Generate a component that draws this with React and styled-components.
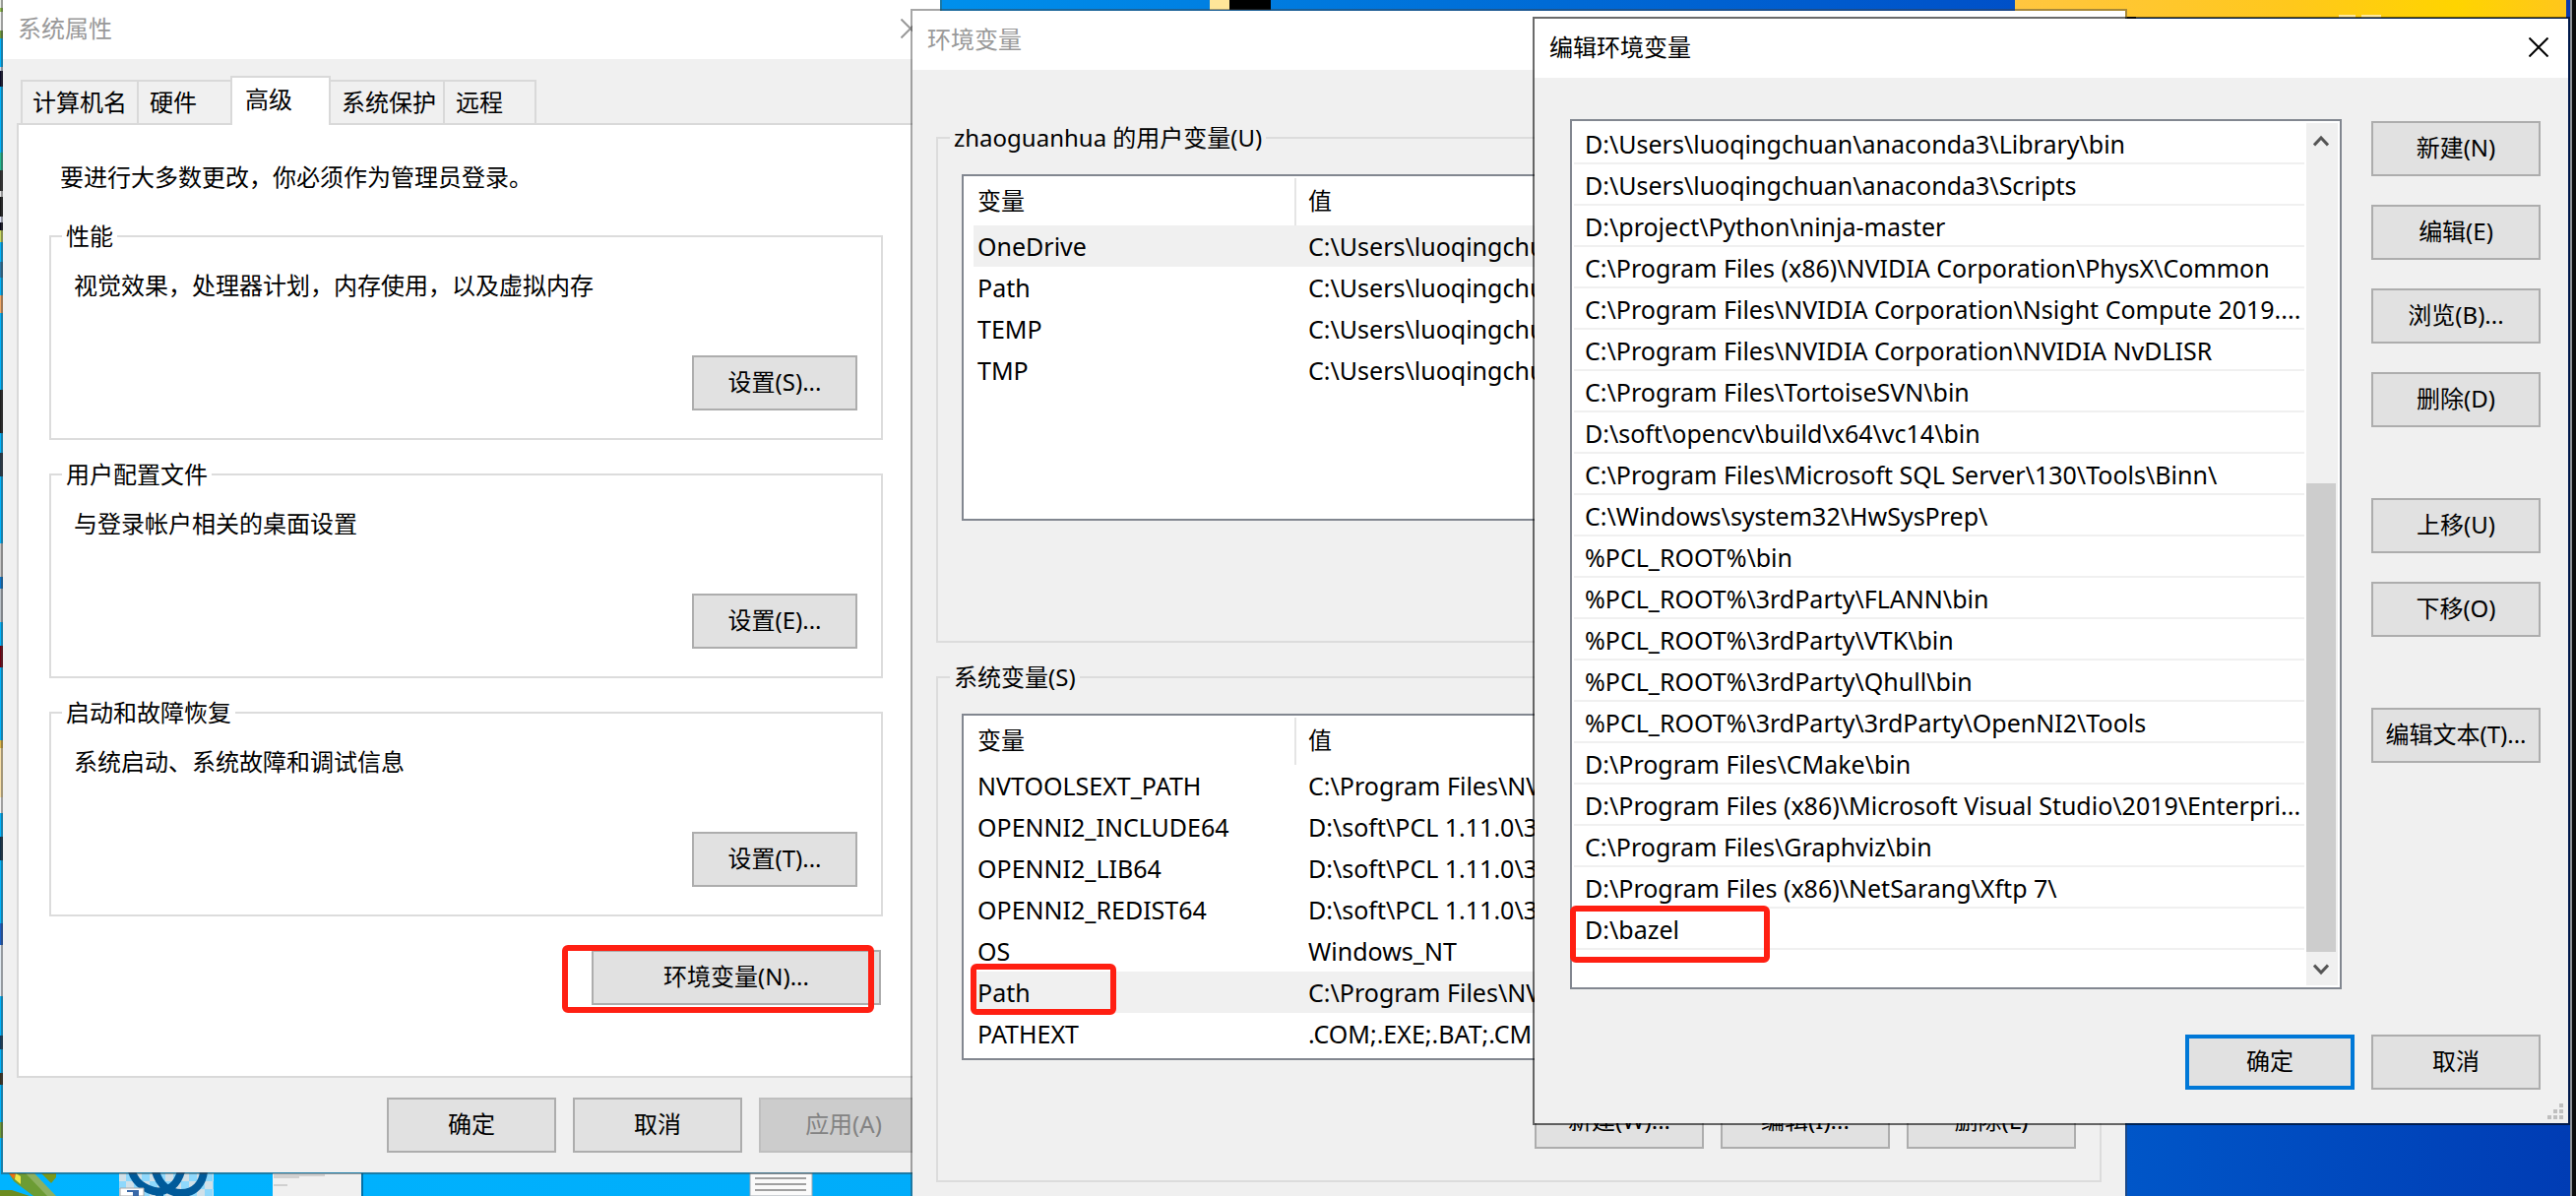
import React from "react";
import styled, { createGlobalStyle, css } from "styled-components";

const GlobalStyle = createGlobalStyle`
  * { box-sizing: border-box; }
  html, body, #root { height: 100%; }
  body {
    margin: 0;
    overflow: hidden;
    color: #000;
    font-family: "Noto Sans", "Noto Sans CJK SC", sans-serif;
    font-size: 24px;
    line-height: 32px;
  }
`;

/* ---------- desktop ---------- */

const Desktop = styled.main`
  position: relative;
  width: 100%;
  height: 100%;
  overflow: hidden;
  background: linear-gradient(90deg, #00b4ff 0%, #00acfa 36%, #0078e0 48%, #0056c8 80%, #003cb4 100%);
`;

const Wallpaper = styled.svg`
  position: absolute;
  left: 0;
  top: 0;
`;

const ScreenEdge = styled.div`
  position: absolute;
  top: 0;
  right: 0;
  bottom: 0;
  width: 6px;
  border-left: 2px solid #8f9296;
  background: #0c0c0c;
`;

/* ---------- window chrome ---------- */

const WindowFrame = styled.section`
  position: absolute;
  display: flex;
  flex-direction: column;
  left: ${(p) => p.$x}px;
  top: ${(p) => p.$y}px;
  width: ${(p) => p.$width}px;
  border: 2px solid ${(p) => (p.$active ? "rgba(0, 0, 0, 0.58)" : "rgba(60, 60, 60, 0.45)")};
  background: #f0f0f0;
  background-clip: padding-box;
`;

const TitleBar = styled.header`
  display: flex;
  align-items: center;
  justify-content: space-between;
  height: 60px;
  padding: 0 20px 3px 15px;
  background: #fff;
  color: ${(p) => (p.$active ? "#000" : "#999")};
`;

const Title = styled.h1`
  margin: 0;
  font-size: 24px;
  font-weight: 400;
`;

const CloseButton = styled.button`
  display: flex;
  padding: 0;
  border: 0;
  background: none;
  color: inherit;
`;

function TitleRow({ title, active, closable }) {
  return (
    <TitleBar $active={active}>
      <Title>{title}</Title>
      {closable && (
        <CloseButton type="button" aria-label="关闭">
          <svg width="20" height="20" viewBox="0 0 20 20" stroke="currentColor" strokeWidth="2">
            <path d="M0.5 0.5L19.5 19.5M19.5 0.5L0.5 19.5" />
          </svg>
        </CloseButton>
      )}
    </TitleBar>
  );
}

/* ---------- shared controls ---------- */

const Button = styled.button`
  width: ${(p) => p.$width || 172}px;
  height: 56px;
  padding: 0 0 2px;
  border: 2px solid #adadad;
  background: #e1e1e1;
  color: #000;
  font-family: inherit;
  font-size: 24px;
  line-height: 32px;
  white-space: nowrap;
  ${(p) => p.$primary && css`border: 4px solid #0078d7;`}
  &:disabled {
    border-color: #bfbfbf;
    background: #ccc;
    color: #838383;
  }
`;

const ButtonRow = styled.div`
  display: flex;
  justify-content: flex-end;
  gap: 17px;
`;

const Group = styled.fieldset`
  min-width: 0;
  margin: 0;
  border: 2px solid #dcdcdc;
`;

const Legend = styled.legend`
  margin-left: -12px;
  padding: 0 4px;
`;

const Marker = styled.span`
  position: absolute;
  inset: ${(p) => p.$inset};
  width: ${(p) => p.$width || "auto"};
  border: 6px solid #ff1f12;
  border-radius: 6px;
  pointer-events: none;
`;

/* ---------- system properties ---------- */

const PropertiesBody = styled.div`
  display: flex;
  flex-direction: column;
  padding: 17px 12px 20px 14px;
`;

const TabBar = styled.nav`
  display: flex;
  align-items: flex-end;
  height: 48px;
  padding-left: 4px;
`;

const Tab = styled.button`
  width: ${(p) => p.$width}px;
  height: 44px;
  padding: 0 0 0 11px;
  border: 2px solid #d9d9d9;
  border-width: 2px 2px 0 0;
  background: #f0f0f0;
  color: #000;
  font-family: inherit;
  font-size: 24px;
  line-height: 32px;
  text-align: left;
  white-space: nowrap;
  &:first-child {
    border-left-width: 2px;
    padding-left: 10px;
  }
  ${(p) =>
    p.$selected &&
    css`
      position: relative;
      height: 50px;
      margin: 0 0 -2px -2px;
      padding: 0 0 4px 13px;
      border-left-width: 2px;
      background: #fff;
    `}
`;

const TabPanel = styled.div`
  margin-right: 2px;
  padding: 37px 42px 72px 31px;
  border: 2px solid #d9d9d9;
  background: #fff;
`;

const Intro = styled.p`
  margin: 0 0 28px;
  padding-left: 11px;
`;

const SettingsGroup = styled(Group)`
  margin-bottom: 19px;
  padding: 18px 24px 28px 23px;
`;

const Description = styled.p`
  margin: 0 0 55px;
`;

const EnvironmentRow = styled.div`
  display: flex;
  justify-content: flex-end;
  margin-top: 34px;
  padding-right: 2px;
`;

const Marked = styled.div`
  position: relative;
  display: flex;
`;

const PropertiesFooter = styled(ButtonRow)`
  margin-top: 20px;
`;

const TABS = [
  { label: "计算机名", width: 120 },
  { label: "硬件", width: 95 },
  { label: "高级", width: 102, selected: true },
  { label: "系统保护", width: 116 },
  { label: "远程", width: 93 },
];

const SETTINGS = [
  { legend: "性能", text: "视觉效果，处理器计划，内存使用，以及虚拟内存", button: "设置(S)..." },
  { legend: "用户配置文件", text: "与登录帐户相关的桌面设置", button: "设置(E)..." },
  { legend: "启动和故障恢复", text: "系统启动、系统故障和调试信息", button: "设置(T)..." },
];

function SystemProperties() {
  return (
    <WindowFrame $x={1} $y={-2} $width={956}>
      <TitleRow title="系统属性" closable />
      <PropertiesBody>
        <TabBar>
          {TABS.map((t) => (
            <Tab key={t.label} type="button" $width={t.width} $selected={t.selected}>
              {t.label}
            </Tab>
          ))}
        </TabBar>
        <TabPanel>
          <Intro>要进行大多数更改，你必须作为管理员登录。</Intro>
          {SETTINGS.map((s) => (
            <SettingsGroup key={s.legend}>
              <Legend>{s.legend}</Legend>
              <Description>{s.text}</Description>
              <ButtonRow>
                <Button type="button" $width={168}>{s.button}</Button>
              </ButtonRow>
            </SettingsGroup>
          ))}
          <EnvironmentRow>
            <Marked>
              <Button type="button" $width={294}>环境变量(N)...</Button>
              <Marker $inset="-5px 7px -8px -30px" />
            </Marked>
          </EnvironmentRow>
        </TabPanel>
        <PropertiesFooter>
          <Button type="button">确定</Button>
          <Button type="button">取消</Button>
          <Button type="button" disabled>应用(A)</Button>
        </PropertiesFooter>
      </PropertiesBody>
    </WindowFrame>
  );
}

/* ---------- environment variables ---------- */

const VariablesBody = styled.div`
  display: flex;
  flex-direction: column;
  gap: 19px;
  padding: 53px 24px 60px;
`;

const VariablesGroup = styled(Group)`
  min-height: 529px;
  padding: 21px 24px 32px;
`;

const ListBox = styled.div`
  height: 352px;
  border: 2px solid #828790;
  background: #fff;
  overflow: hidden;
`;

const VariablesTable = styled.table`
  width: calc(100% - 10px);
  margin: 2px 0 0 10px;
  border-collapse: separate;
  border-spacing: 0;
  table-layout: fixed;
  white-space: nowrap;
`;

const HeadCell = styled.th`
  width: ${(p) => p.$width || "auto"};
  height: 48px;
  padding: 0 0 2px ${(p) => (p.$width ? 4 : 12)}px;
  border-right: ${(p) => (p.$width ? "2px solid #e5e5e5" : "0")};
  font-weight: 400;
  text-align: left;
`;

const VariableRow = styled.tr`
  background: ${(p) => (p.$selected ? "#f0f0f0" : "transparent")};
`;

const listText = css`
  font-size: 25px;
  white-space: nowrap;
`;

const Cell = styled.td`
  ${listText}
  position: relative;
  height: 42px;
  padding: 0 0 0 ${(p) => (p.$name ? 4 : 12)}px;
`;

const VariablesButtons = styled(ButtonRow)`
  margin-top: 34px;
`;

const USER_VARIABLES = [
  { name: "OneDrive", value: "C:\\Users\\luoqingchu", selected: true },
  { name: "Path", value: "C:\\Users\\luoqingchu" },
  { name: "TEMP", value: "C:\\Users\\luoqingchu" },
  { name: "TMP", value: "C:\\Users\\luoqingchu" },
];

const SYSTEM_VARIABLES = [
  { name: "NVTOOLSEXT_PATH", value: "C:\\Program Files\\NV" },
  { name: "OPENNI2_INCLUDE64", value: "D:\\soft\\PCL 1.11.0\\3" },
  { name: "OPENNI2_LIB64", value: "D:\\soft\\PCL 1.11.0\\3" },
  { name: "OPENNI2_REDIST64", value: "D:\\soft\\PCL 1.11.0\\3" },
  { name: "OS", value: "Windows_NT" },
  { name: "Path", value: "C:\\Program Files\\NV", selected: true, marked: true },
  { name: "PATHEXT", value: ".COM;.EXE;.BAT;.CM" },
];

function VariableList({ items }) {
  return (
    <ListBox>
      <VariablesTable>
        <thead>
          <tr>
            <HeadCell scope="col" $width="328px">变量</HeadCell>
            <HeadCell scope="col">值</HeadCell>
          </tr>
        </thead>
        <tbody>
          {items.map((v) => (
            <VariableRow key={v.name} $selected={v.selected}>
              <Cell $name>
                {v.name}
                {v.marked && <Marker $inset="-8px auto -2px -3px" $width="148px" />}
              </Cell>
              <Cell>{v.value}</Cell>
            </VariableRow>
          ))}
        </tbody>
      </VariablesTable>
    </ListBox>
  );
}

function EnvironmentVariables() {
  return (
    <WindowFrame $x={925} $y={9} $width={1236}>
      <TitleRow title="环境变量" />
      <VariablesBody>
        <VariablesGroup>
          <Legend>zhaoguanhua 的用户变量(U)</Legend>
          <VariableList items={USER_VARIABLES} />
        </VariablesGroup>
        <VariablesGroup>
          <Legend>系统变量(S)</Legend>
          <VariableList items={SYSTEM_VARIABLES} />
          <VariablesButtons>
            <Button type="button">新建(W)...</Button>
            <Button type="button">编辑(I)...</Button>
            <Button type="button">删除(L)</Button>
          </VariablesButtons>
        </VariablesGroup>
      </VariablesBody>
    </WindowFrame>
  );
}

/* ---------- edit environment variable ---------- */

const EditorBody = styled.div`
  display: flex;
  flex-direction: column;
  gap: 46px;
  padding: 42px 28px 34px 36px;
`;

const EditorMain = styled.div`
  display: flex;
  gap: 30px;
`;

const PathBox = styled.div`
  display: flex;
  flex: 1;
  gap: 2px;
  height: 884px;
  padding: 2px;
  border: 2px solid #828790;
  background: #fff;
`;

const PathList = styled.ul`
  flex: 1;
  min-width: 0;
  margin: 0;
  padding: 0;
  list-style: none;
`;

const PathItem = styled.li`
  ${listText}
  position: relative;
  height: 42px;
  padding: 5px 0 0 11px;
  border-bottom: 2px solid #f0f0f0;
`;

const ScrollBar = styled.div`
  display: flex;
  flex-direction: column;
  width: 32px;
  background: #f0f0f0;
`;

const ScrollButton = styled.button`
  display: flex;
  align-items: center;
  justify-content: center;
  height: 34px;
  padding: 2px 2px 0 0;
  border: 0;
  background: none;
`;

const ScrollGap = styled.div`
  flex: 332;
`;

const ScrollThumb = styled.div`
  flex: 476;
  margin-right: 2px;
  background: #cdcdcd;
`;

const SideButtons = styled.div`
  display: flex;
  flex-direction: column;
  gap: 72px;
  padding-top: 2px;
`;

const ButtonStack = styled.div`
  display: flex;
  flex-direction: column;
  gap: 29px;
`;

const SizeGrip = styled.svg`
  position: absolute;
  right: 5px;
  bottom: 4px;
`;

const PATHS = [
  "D:\\Users\\luoqingchuan\\anaconda3\\Library\\bin",
  "D:\\Users\\luoqingchuan\\anaconda3\\Scripts",
  "D:\\project\\Python\\ninja-master",
  "C:\\Program Files (x86)\\NVIDIA Corporation\\PhysX\\Common",
  "C:\\Program Files\\NVIDIA Corporation\\Nsight Compute 2019....",
  "C:\\Program Files\\NVIDIA Corporation\\NVIDIA NvDLISR",
  "C:\\Program Files\\TortoiseSVN\\bin",
  "D:\\soft\\opencv\\build\\x64\\vc14\\bin",
  "C:\\Program Files\\Microsoft SQL Server\\130\\Tools\\Binn\\",
  "C:\\Windows\\system32\\HwSysPrep\\",
  "%PCL_ROOT%\\bin",
  "%PCL_ROOT%\\3rdParty\\FLANN\\bin",
  "%PCL_ROOT%\\3rdParty\\VTK\\bin",
  "%PCL_ROOT%\\3rdParty\\Qhull\\bin",
  "%PCL_ROOT%\\3rdParty\\3rdParty\\OpenNI2\\Tools",
  "D:\\Program Files\\CMake\\bin",
  "D:\\Program Files (x86)\\Microsoft Visual Studio\\2019\\Enterpri...",
  "C:\\Program Files\\Graphviz\\bin",
  "D:\\Program Files (x86)\\NetSarang\\Xftp 7\\",
  "D:\\bazel",
];

const ACTIONS = [
  ["新建(N)", "编辑(E)", "浏览(B)...", "删除(D)"],
  ["上移(U)", "下移(O)"],
  ["编辑文本(T)..."],
];

function Chevron({ down }) {
  return (
    <svg width="16" height="12" viewBox="0 0 16 12" fill="none" stroke="#555" strokeWidth="3">
      <path d={down ? "M1 1.5L8 9L15 1.5" : "M1 10.5L8 3L15 10.5"} />
    </svg>
  );
}

function EditVariable() {
  return (
    <WindowFrame $x={1557} $y={17} $width={1054} $active>
      <TitleRow title="编辑环境变量" active closable />
      <EditorBody>
        <EditorMain>
          <PathBox>
            <PathList>
              {PATHS.map((path, i) => (
                <PathItem key={path}>
                  {path}
                  {i === PATHS.length - 1 && <Marker $inset="-3px auto -15px -4px" $width="203px" />}
                </PathItem>
              ))}
            </PathList>
            <ScrollBar>
              <ScrollButton type="button" aria-label="向上滚动"><Chevron /></ScrollButton>
              <ScrollGap />
              <ScrollThumb />
              <ScrollButton type="button" aria-label="向下滚动"><Chevron down /></ScrollButton>
            </ScrollBar>
          </PathBox>
          <SideButtons>
            {ACTIONS.map((group) => (
              <ButtonStack key={group[0]}>
                {group.map((label) => (
                  <Button key={label} type="button">{label}</Button>
                ))}
              </ButtonStack>
            ))}
          </SideButtons>
        </EditorMain>
        <ButtonRow>
          <Button type="button" $primary>确定</Button>
          <Button type="button">取消</Button>
        </ButtonRow>
      </EditorBody>
      <SizeGrip width="16" height="16" viewBox="0 0 16 16" fill="#bfbfbf">
        <path d="M12 0h4v4h-4zM6 6h4v4H6zM12 6h4v4h-4zM0 12h4v4H0zM6 12h4v4H6zM12 12h4v4h-4z" />
      </SizeGrip>
    </WindowFrame>
  );
}

/* Slivers of desktop icons that show between the window edge and the screen edge: [y, height, colour] */
const EDGE_ICONS = [
  [0, 8, "#e8ece4"], [8, 4, "#8fc04a"], [12, 19, "#eef0ee"], [31, 8, "#6f9c3c"],
  [68, 4, "#cfd8e8"], [72, 16, "#0c0c28"], [155, 18, "#22b890"], [173, 26, "#2c2c2c"],
  [194, 6, "#e0e0e0"], [200, 20, "#181818"], [220, 6, "#d8dcf0"], [226, 8, "#080818"],
  [234, 12, "#c8d860"], [266, 16, "#2878a8"], [300, 18, "#f0a868"], [396, 44, "#202020"],
  [460, 24, "#243848"], [552, 34, "#c8c8c8"], [586, 12, "#0a78d0"], [598, 34, "#b8c0c8"],
  [656, 22, "#700010"], [752, 8, "#e0b848"], [760, 50, "#f8e0a8"], [810, 16, "#f0f0f0"],
  [850, 24, "#103048"], [938, 22, "#1860c8"], [960, 52, "#dfe8f0"], [1052, 14, "#103c60"],
  [1090, 12, "#383020"], [1140, 16, "#6c9c38"],
];

function Backdrop() {
  return (
    <Wallpaper width="2611" height="1215" viewBox="0 0 2611 1215" aria-hidden="true">
      <defs>
        <linearGradient id="banner">
          <stop offset="0" stopColor="#ffc640" />
          <stop offset="0.5" stopColor="#ffc81c" />
          <stop offset="0.8" stopColor="#ffd400" />
          <stop offset="1" stopColor="#ffc61c" />
        </linearGradient>
        <linearGradient id="sky">
          <stop offset="0" stopColor="#0090ec" />
          <stop offset="0.5" stopColor="#006fd8" />
          <stop offset="1" stopColor="#0050c8" />
        </linearGradient>
        <linearGradient id="deep">
          <stop offset="0" stopColor="#0056c8" />
          <stop offset="1" stopColor="#003cb4" />
        </linearGradient>
        <pattern id="checker" width="16" height="16" patternUnits="userSpaceOnUse">
          <rect width="16" height="16" fill="#8ed8fc" />
          <path d="M0 0h8v8H0zM8 8h8v8H8z" fill="#d0e0e8" />
        </pattern>
      </defs>
      <rect x="957" y="0" width="1090" height="18" fill="url(#sky)" />
      <rect x="1229" y="0" width="20" height="10" fill="#ffe699" />
      <rect x="1249" y="0" width="42" height="10" fill="#000" />
      <rect x="2047" y="0" width="560" height="18" fill="url(#banner)" />
      <path d="M2161 17h9v2h-9z" fill="#111" />
      <path d="M2376 15h17v3h-17zM2399 15h20v3h-20z" fill="#ffe9a0" />
      <rect x="2607" y="0" width="4" height="20" fill="#0c3ab0" />
      <rect x="2161" y="1140" width="450" height="75" fill="url(#deep)" />
      {EDGE_ICONS.map(([y, h, fill]) => (
        <rect key={y} x="0" y={y} width="3" height={h} fill={fill} />
      ))}
      <path d="M9 1192H32L56 1215H34L14 1200z" fill="#6c9c34" />
      <path d="M26 1192h9l22 23h-9z" fill="#8cb060" />
      <path d="M42 1192h15v4l-5 6z" fill="#78981c" />
      <path d="M9 1192h7l-2 6z" fill="#f07010" />
      <path d="M16 1192l5 3v8l-6-5z" fill="#f0e848" />
      <path d="M0 1209h12l18 6H0z" fill="#6c8c20" />
      <rect x="121" y="1192" width="96" height="23" fill="url(#checker)" />
      <g fill="none" stroke="#005a9a" strokeWidth="8">
        <path d="M134 1190C138 1204 152 1211 166 1211" />
        <path d="M158 1190C162 1204 172 1212 184 1212C198 1212 206 1202 207 1190" />
        <path d="M184 1190C180 1204 172 1210 158 1211" />
      </g>
      <path d="M122 1207h24v8h-24z" fill="#fff" stroke="#a8a8a8" />
      <path d="M129 1209h12v6h-6v-4h-6z" fill="#3868a8" />
      <rect x="277" y="1192" width="90" height="23" fill="#f0f0f0" />
      <rect x="367" y="1192" width="2" height="23" fill="#0070a8" />
      <path d="M278 1193h52v2h-26v2h-26zM278 1203h14v2h-14z" fill="#d0d0d0" />
      <rect x="762" y="1192" width="63" height="23" fill="#fafafa" stroke="#a0a8b0" />
      <path d="M767 1197h52M767 1203h52M767 1209h52" stroke="#a0a0a0" strokeWidth="2" />
    </Wallpaper>
  );
}

export default function App() {
  return (
    <>
      <GlobalStyle />
      <Desktop>
        <Backdrop />
        <SystemProperties />
        <EnvironmentVariables />
        <EditVariable />
        <ScreenEdge />
      </Desktop>
    </>
  );
}
